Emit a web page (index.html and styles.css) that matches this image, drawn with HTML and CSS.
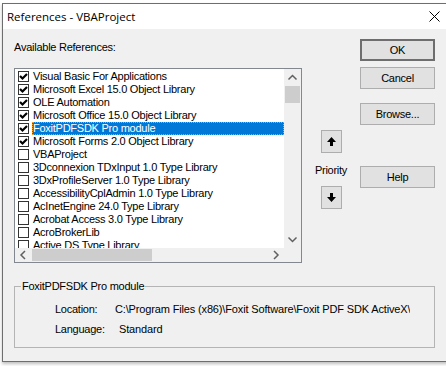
FILE: index.html
```html
<!DOCTYPE html>
<html lang="en">

<head>
    <meta charset="UTF-8">
    <meta name="viewport" content="width=device-width, initial-scale=1.0">
    <title>References - VBAProject</title>
    <link rel="stylesheet" href="styles.css">
</head>

<body>
    <div class="window">
        <div class="titlebar">
            <span class="title">References - VBAProject</span>
            <svg class="close" width="11" height="11" viewBox="0 0 11 11">
                <path d="M0.5 0.5 L10.5 10.5 M10.5 0.5 L0.5 10.5" stroke="#000" stroke-width="1" />
            </svg>
        </div>

        <div class="dialog">
            <div class="top">
                <div class="refs">
                    <div class="label">Available References:</div>
                    <div class="listbox">
                        <div class="list-area">
                            <ul class="items">
                                <li class="item"><span class="box"><svg class="tick" width="9" height="9" viewBox="0 0 9 9"><path d="M1 4 L3.5 6.5 L8 2" /></svg></span><span class="name">Visual Basic For Applications</span></li>
                                <li class="item"><span class="box"><svg class="tick" width="9" height="9" viewBox="0 0 9 9"><path d="M1 4 L3.5 6.5 L8 2" /></svg></span><span class="name">Microsoft Excel 15.0 Object Library</span></li>
                                <li class="item"><span class="box"><svg class="tick" width="9" height="9" viewBox="0 0 9 9"><path d="M1 4 L3.5 6.5 L8 2" /></svg></span><span class="name">OLE Automation</span></li>
                                <li class="item"><span class="box"><svg class="tick" width="9" height="9" viewBox="0 0 9 9"><path d="M1 4 L3.5 6.5 L8 2" /></svg></span><span class="name">Microsoft Office 15.0 Object Library</span></li>
                                <li class="item selected"><span class="box"><svg class="tick" width="9" height="9" viewBox="0 0 9 9"><path d="M1 4 L3.5 6.5 L8 2" /></svg></span><span class="name">FoxitPDFSDK Pro module</span></li>
                                <li class="item"><span class="box"><svg class="tick" width="9" height="9" viewBox="0 0 9 9"><path d="M1 4 L3.5 6.5 L8 2" /></svg></span><span class="name">Microsoft Forms 2.0 Object Library</span></li>
                                <li class="item"><span class="box"></span><span class="name">VBAProject</span></li>
                                <li class="item"><span class="box"></span><span class="name">3Dconnexion TDxInput 1.0 Type Library</span></li>
                                <li class="item"><span class="box"></span><span class="name">3DxProfileServer 1.0 Type Library</span></li>
                                <li class="item"><span class="box"></span><span class="name">AccessibilityCplAdmin 1.0 Type Library</span></li>
                                <li class="item"><span class="box"></span><span class="name">AcInetEngine 24.0 Type Library</span></li>
                                <li class="item"><span class="box"></span><span class="name">Acrobat Access 3.0 Type Library</span></li>
                                <li class="item"><span class="box"></span><span class="name">AcroBrokerLib</span></li>
                                <li class="item"><span class="box"></span><span class="name">Active DS Type Library</span></li>
                            </ul>
                            <div class="vscroll">
                                <svg class="arrow" width="17" height="17" viewBox="0 0 17 17">
                                    <path d="M4.5 10.5 L8.5 6.5 L12.5 10.5" fill="none" stroke="#606060" stroke-width="1.5" />
                                </svg>
                                <div class="vthumb"></div>
                                <div class="spacer"></div>
                                <svg class="arrow" width="17" height="17" viewBox="0 0 17 17">
                                    <path d="M4.5 6.5 L8.5 10.5 L12.5 6.5" fill="none" stroke="#606060" stroke-width="1.5" />
                                </svg>
                            </div>
                        </div>
                        <div class="hscroll">
                            <svg class="arrow" width="17" height="14" viewBox="0 0 17 14">
                                <path d="M10 3 L6 7 L10 11" fill="none" stroke="#606060" stroke-width="1.5" />
                            </svg>
                            <div class="hthumb"></div>
                            <div class="spacer"></div>
                            <svg class="arrow" width="17" height="14" viewBox="0 0 17 14">
                                <path d="M7 3 L11 7 L7 11" fill="none" stroke="#606060" stroke-width="1.5" />
                            </svg>
                            <div class="corner"></div>
                        </div>
                    </div>
                </div>

                <div class="priority">
                    <button class="btn small">
                        <svg width="9" height="9" viewBox="0 0 9 9"><path d="M4.5 0 L9 5 L6 5 L6 9 L3 9 L3 5 L0 5 Z" fill="#000" /></svg>
                    </button>
                    <span class="priority-label">Priority</span>
                    <button class="btn small">
                        <svg width="9" height="9" viewBox="0 0 9 9"><path d="M4.5 9 L9 4 L6 4 L6 0 L3 0 L3 4 L0 4 Z" fill="#000" /></svg>
                    </button>
                </div>

                <div class="actions">
                    <button class="btn default">OK</button>
                    <button class="btn cancel">Cancel</button>
                    <button class="btn browse">Browse...</button>
                    <button class="btn help">Help</button>
                </div>
            </div>

            <fieldset class="info">
                <legend>FoxitPDFSDK Pro module</legend>
                <div class="info-row">
                    <span class="key">Location:</span>
                    <span class="val">C:\Program Files (x86)\Foxit Software\Foxit PDF SDK ActiveX\bin</span>
                </div>
                <div class="info-row">
                    <span class="key">Language:</span>
                    <span class="val lang">Standard</span>
                </div>
            </fieldset>
        </div>
    </div>
</body>

</html>
```

FILE: styles.css
```css
* {
    margin: 0;
    padding: 0;
    box-sizing: border-box;
}

body {
    background: #fff;
    width: 446px;
    height: 366px;
    overflow: hidden;
    font-family: 'Liberation Sans', Arial, sans-serif;
    font-size: 11px;
    letter-spacing: -0.25px;
    color: #000;
    padding: 3px 0 0 2px;
}

.window {
    width: 460px;
    height: 359px;
    border: 1px solid #6e6e6e;
    background: #f0f0f0;
    box-shadow: 0 2px 3px rgba(0, 0, 0, .25);
}

.titlebar {
    height: 25px;
    background: #fff;
    display: flex;
    align-items: center;
    padding-left: 4px;
}

.title {
    font-family: 'Open Sans', 'Noto Sans', sans-serif;
    font-size: 11.5px;
    letter-spacing: 0;
    flex: 1;
}

.close {
    margin-right: 21px;
}

.dialog {
    padding: 10px 0 0 11px;
}

.top {
    display: flex;
}

.refs {
    width: 288px;
}

.label {
    margin-top: 1px;
    height: 14px;
    line-height: 14px;
}

.listbox {
    margin-top: 14px;
    width: 288px;
    height: 195px;
    border: 1px solid #828790;
    background: #fff;
    display: flex;
    flex-direction: column;
}

.list-area {
    flex: 1;
    display: flex;
    overflow: hidden;
}

.items {
    list-style: none;
    flex: 1;
    overflow: hidden;
    padding-top: 1px;
}

.item {
    height: 13px;
    display: flex;
    align-items: center;
    white-space: nowrap;
}

.box {
    width: 11px;
    height: 11px;
    border: 1px solid #333;
    background: #fff;
    margin: 0 3px 0 3px;
    flex: none;
}

.tick {
    display: block;
}

.tick path {
    fill: none;
    stroke: #000;
    stroke-width: 2.2;
}

.name {
    line-height: 13px;
    padding: 0 1px;
    height: 13px;
}

.selected .name {
    flex: 1;
    background: #0078d7;
    color: #fff;
    outline: 1px dotted #f49b28;
    outline-offset: -1px;
}

.vscroll {
    width: 17px;
    background: #f0f0f0;
    display: flex;
    flex-direction: column;
}

.vthumb {
    height: 17px;
    margin: 0 1px;
    background: #cdcdcd;
}

.spacer {
    flex: 1;
}

.arrow {
    display: block;
    flex: none;
}

.hscroll {
    height: 14px;
    background: #f0f0f0;
    display: flex;
    align-items: stretch;
}

.hthumb {
    width: 120px;
    margin: 1px 0;
    background: #cdcdcd;
}

.corner {
    width: 17px;
    background: #f0f0f0;
}

.priority {
    width: 58px;
    display: flex;
    flex-direction: column;
    align-items: center;
    padding-top: 91px;
}

.priority-label {
    margin: 10px 0 9px;
    line-height: 14px;
}

.actions {
    width: 75px;
    display: flex;
    flex-direction: column;
}

.btn {
    font-family: inherit;
    font-size: 11px;
    letter-spacing: -0.25px;
    width: 75px;
    height: 22px;
    background: #e1e1e1;
    border: 1px solid #adadad;
    color: #000;
}

.btn.default {
    border: 2px solid #6e6e6e;
}

.btn.cancel {
    margin-top: 6px;
}

.btn.browse {
    margin-top: 14px;
}

.btn.help {
    margin-top: 41px;
}

.btn.small {
    width: 21px;
    height: 23px;
    display: flex;
    align-items: center;
    justify-content: center;
}

.info {
    margin-top: 16px;
    width: 421px;
    height: 69px;
    border: 1px solid #b4b4b4;
    padding: 6px 0 0 40px;
}

.info legend {
    margin-left: -34px;
    padding: 0 1px;
    line-height: 14px;
}

.info-row {
    display: flex;
    height: 20px;
    align-items: center;
    white-space: nowrap;
    overflow: hidden;
    width: 355px;
}

.key {
    width: 60px;
    flex: none;
}

.val {
    letter-spacing: -0.15px;
}

.val.lang {
    margin-left: 4px;
}
```
